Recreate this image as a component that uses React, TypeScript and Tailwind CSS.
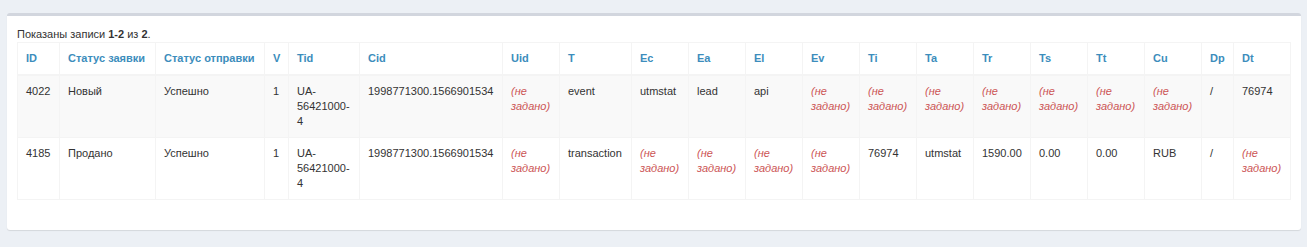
import React from "react";

const cols: { name: string; w: number }[] = [
  { name: "ID", w: 42 },
  { name: "Статус заявки", w: 96 },
  { name: "Статус отправки", w: 109 },
  { name: "V", w: 24 },
  { name: "Tid", w: 71 },
  { name: "Cid", w: 143 },
  { name: "Uid", w: 57 },
  { name: "T", w: 72 },
  { name: "Ec", w: 57 },
  { name: "Ea", w: 57 },
  { name: "El", w: 57 },
  { name: "Ev", w: 57 },
  { name: "Ti", w: 57 },
  { name: "Ta", w: 57 },
  { name: "Tr", w: 57 },
  { name: "Ts", w: 57 },
  { name: "Tt", w: 57 },
  { name: "Cu", w: 57 },
  { name: "Dp", w: 32 },
  { name: "Dt", w: 57 },
];

const N = null;
const rows: (string | null)[][] = [
  ["4022", "Новый", "Успешно", "1", "UA-56421000-4", "1998771300.1566901534", N, "event", "utmstat", "lead", "api", N, N, N, N, N, N, N, "/", "76974"],
  ["4185", "Продано", "Успешно", "1", "UA-56421000-4", "1998771300.1566901534", N, "transaction", N, N, N, N, "76974", "utmstat", "1590.00", "0.00", "0.00", "RUB", "/", N],
];

export default function App() {
  return (
    <div
      className="min-h-[247px] w-[1307px] bg-[#ecf0f5] pt-[13px] pl-[7px] text-[11px] leading-[16px] text-[#333]"
      style={{ fontFamily: '"Liberation Sans", Arial, sans-serif' }}
    >
      <div className="w-[1294px] rounded-[3px] border-t-[3px] border-[#d2d6de] bg-white p-[10px] shadow-[0_1px_1px_rgba(0,0,0,0.1)]">
        <div className="h-[16px]">
          Показаны записи <b>1-2</b> из <b>2</b>.
        </div>
        <table className="mb-[20px] w-[1273px] table-fixed border border-[#f4f4f4] leading-[15px]">
          <colgroup>
            {cols.map((c) => (
              <col key={c.name} style={{ width: c.w }} />
            ))}
          </colgroup>
          <thead>
            <tr>
              {cols.map((c) => (
                <th
                  key={c.name}
                  className="border border-b-2 border-[#f4f4f4] px-2 py-2 text-left align-bottom font-bold text-[#3c8dbc]"
                >
                  {c.name}
                </th>
              ))}
            </tr>
          </thead>
          <tbody>
            {rows.map((r, i) => (
              <tr key={i} className={i === 0 ? "bg-[#f9f9f9]" : "bg-white"}>
                {r.map((v, j) => (
                  <td key={j} className="border border-[#f4f4f4] px-2 py-2 align-top">
                    {v === null ? <span className="italic text-[#c55]">(не задано)</span> : v}
                  </td>
                ))}
              </tr>
            ))}
          </tbody>
        </table>
      </div>
    </div>
  );
}
